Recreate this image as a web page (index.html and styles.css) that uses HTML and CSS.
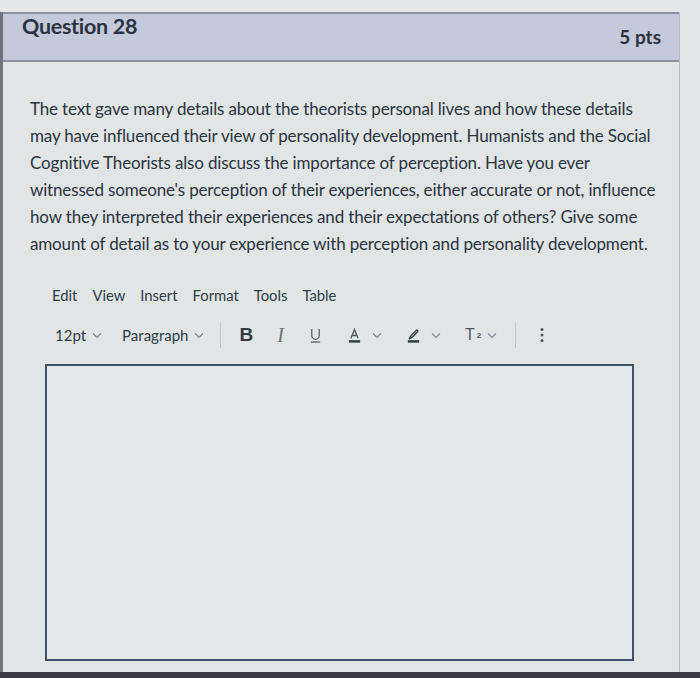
FILE: index.html
```html
<!DOCTYPE html>
<html lang="en">
<head>
<meta charset="utf-8">
<title>Question 28</title>
<link rel="stylesheet" href="styles.css">
</head>
<body>
<div class="screen">
  <div class="question">
    <div class="q-header">
      <h2 class="q-title">Question 28</h2>
      <span class="q-points">5 pts</span>
    </div>
    <div class="q-body">
      <p class="q-text">The text gave many details about the theorists personal lives and how these details may have influenced their view of personality development. Humanists and the Social Cognitive Theorists also discuss the importance of perception. Have you ever witnessed someone's perception of their experiences, either accurate or not, influence how they interpreted their experiences and their expectations of others? Give some amount of detail as to your experience with perception and personality development.</p>
      <div class="rce">
        <div class="menubar">
          <span>Edit</span><span>View</span><span>Insert</span><span>Format</span><span>Tools</span><span>Table</span>
        </div>
        <div class="toolbar">
          <span class="tb-item">12pt <svg class="chev" viewBox="0 0 10 6"><path d="M1 1l4 4 4-4"/></svg></span>
          <span class="tb-item">Paragraph <svg class="chev" viewBox="0 0 10 6"><path d="M1 1l4 4 4-4"/></svg></span>
          <span class="sep"></span>
          <span class="tb-btn bold">B</span>
          <span class="tb-btn italic">I</span>
          <span class="tb-btn">
            <svg class="ico" viewBox="0 0 16 18"><path d="M4 2v7a4 4 0 0 0 8 0V2" fill="none" stroke="#5b6570" stroke-width="1.4"/><path d="M3 16h10" stroke="#5b6570" stroke-width="1.4"/></svg>
          </span>
          <span class="tb-btn">
            <svg class="ico" viewBox="0 0 16 18"><path d="M4.2 12L8 2.5 11.8 12M5.5 9h5" fill="none" stroke="#4b5560" stroke-width="1.4"/><rect x="2" y="14" width="12" height="2.6" fill="#2d3b45"/></svg>
            <svg class="chev" viewBox="0 0 10 6"><path d="M1 1l4 4 4-4"/></svg>
          </span>
          <span class="tb-btn">
            <svg class="ico" viewBox="0 0 16 18"><path d="M3.5 12.5c0.5-1.5 1.5-3 3-4.5l4.5-4.5c0.8-0.8 2.2 0.4 1.4 1.3L8 9.5c-1.5 1.5-3 2.5-4.5 3z" fill="none" stroke="#2d3b45" stroke-width="1.4" stroke-linejoin="round"/><rect x="2" y="14" width="12" height="2.6" fill="#2d3b45"/></svg>
            <svg class="chev" viewBox="0 0 10 6"><path d="M1 1l4 4 4-4"/></svg>
          </span>
          <span class="tb-btn sup">T<sup>2</sup><svg class="chev" viewBox="0 0 10 6"><path d="M1 1l4 4 4-4"/></svg></span>
          <span class="sep sep2"></span>
          <span class="tb-btn more"><svg viewBox="0 0 4 16" class="dots"><circle cx="2" cy="2.5" r="1.5"/><circle cx="2" cy="8" r="1.5"/><circle cx="2" cy="13.5" r="1.5"/></svg></span>
        </div>
        <div class="editor"></div>
      </div>
    </div>
  </div>
  <div class="bezel"></div>
</div>
</body>
</html>
```

FILE: styles.css
```css
html, body {
  margin: 0;
  padding: 0;
}
body {
  background: #e5e7e8;
  font-family: Lato, "Liberation Sans", sans-serif;
  color: #2d3b45;
  width: 700px;
  height: 678px;
  overflow: hidden;
}
.screen {
  height: 678px;
  display: flex;
  flex-direction: column;
  padding-top: 12px;
  box-sizing: border-box;
}
.question {
  flex: 1;
  min-height: 0;
  margin-right: 20px;
  border-left: 3px solid #6f747a;
  border-right: 1px solid #b9bcbf;
  background: #e2e5e5;
  display: flex;
  flex-direction: column;
}
.q-header {
  background: #c4c9dc;
  border-top: 2px solid #8a90a2;
  border-bottom: 2px solid #8c909c;
  height: 46px;
  flex: none;
  display: flex;
  justify-content: space-between;
  padding: 0 18px 0 19px;
}
.q-title {
  margin: 0;
  font-size: 21.5px;
  font-weight: 700;
  line-height: 1;
  padding-top: 2px;
  color: #2b3340;
  letter-spacing: -0.3px;
}
.q-points {
  font-size: 19px;
  font-weight: 700;
  align-self: flex-start;
  padding-top: 11px;
  color: #2b3340;
}
.q-body {
  flex: 1;
  padding: 33px 0 0 27px;
  display: flex;
  flex-direction: column;
}
.q-text {
  margin: 0;
  width: 631px;
  font-size: 17px;
  line-height: 27px;
  letter-spacing: -0.16px;
  color: #2a3440;
}
.rce {
  display: flex;
  flex-direction: column;
  padding-left: 15px;
  width: 589px;
}
.menubar {
  display: flex;
  gap: 15px;
  font-size: 14.8px;
  line-height: 17px;
  padding-top: 30px;
  padding-left: 7px;
  color: #2d3b45;
}
.toolbar {
  display: flex;
  align-items: center;
  height: 26px;
  margin-top: 18px;
  padding-left: 10px;
  font-size: 15px;
  color: #2d3b45;
}
.tb-item {
  display: inline-flex;
  align-items: center;
  gap: 6px;
  margin-right: 20px;
}
.chev {
  width: 10px;
  height: 7px;
  fill: none;
  stroke: #7f8992;
  stroke-width: 1.2;
}
.sep {
  width: 1px;
  height: 26px;
  background: #c3c7cb;
  margin-right: 18px;
  margin-left: -4px;
}
.tb-btn {
  display: inline-flex;
  align-items: center;
  gap: 10px;
  margin-right: 24px;
}
.bold {
  font-family: "Liberation Sans", Arial, sans-serif;
  font-weight: 700;
  font-size: 19px;
  color: #343b42;
}
.italic {
  font-family: "Liberation Serif", serif;
  font-style: italic;
  font-size: 20px;
  color: #6a727a;
}
.ico {
  width: 15px;
  height: 17px;
}
.sup {
  font-size: 16px;
  color: #4b5560;
  gap: 2px;
  font-family: "Liberation Sans", sans-serif;
}
.sup sup {
  font-size: 8px;
  margin-right: 4px;
  font-weight: 700;
}
.sep2 {
  margin-left: -6px;
  margin-right: 24px;
}
.dots {
  width: 4px;
  height: 16px;
  fill: #4b5560;
}
.editor {
  margin-top: 16px;
  height: 293px;
  border: 2px solid #3f5068;
  background: #e6e9e9;
}
.bezel {
  height: 6px;
  flex: none;
  background: #3a3a40;
}
```
